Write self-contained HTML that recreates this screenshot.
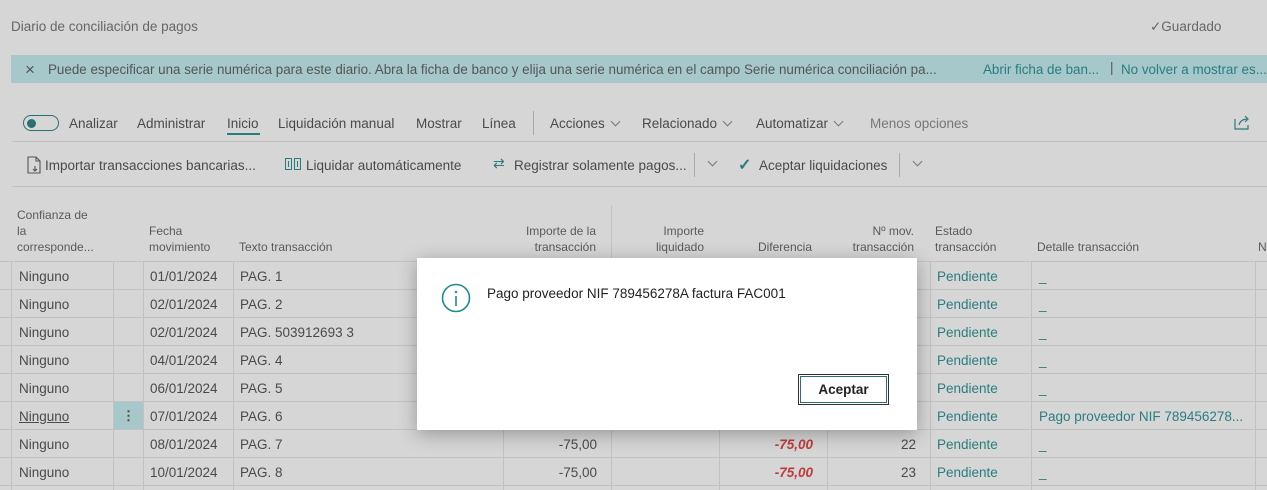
<!DOCTYPE html>
<html><head><meta charset="utf-8"><style>
*{margin:0;padding:0;box-sizing:border-box}
body{width:1267px;height:490px;overflow:hidden;background:#d6d6d6;font-family:"Liberation Sans",sans-serif;color:#4a4a4a;position:relative;font-size:13.5px}
.a{position:absolute;white-space:nowrap}
.t{color:#2a7d7e}
.h{font-size:12px;color:#5a5a5a;line-height:16px}
.hl{position:absolute;height:1px;background:#c2c2c2}
.vl{position:absolute;width:1px;background:#c2c2c2}
.cell{position:absolute;white-space:nowrap;font-size:13.5px;line-height:28px}
.chev{display:inline-block;width:7px;height:7px;border-right:1px solid #777;border-bottom:1px solid #777;transform:rotate(45deg);margin-left:7px;position:relative;top:-3px}
</style></head><body>
<div class="a" style="left:11px;top:19px;color:#666">Diario de conciliación de pagos</div>
<div class="a" style="left:1150px;top:19px;color:#666">✓Guardado</div>
<div class="a" style="left:11px;top:55px;width:1256px;height:28px;background:#a6c8ca"></div>
<div class="a" style="left:25px;top:60px;font-size:17px;color:#555">×</div>
<div class="a" style="left:48px;top:62px;color:#555;font-size:13.4px">Puede especificar una serie numérica para este diario. Abra la ficha de banco y elija una serie numérica en el campo Serie numérica conciliación pa...</div>
<div class="a t" style="left:983px;top:62px;font-size:13.4px">Abrir ficha de ban...</div>
<div class="a" style="left:1110px;top:60px;color:#555">|</div>
<div class="a t" style="left:1121px;top:62px;font-size:13.4px">No volver a mostrar es...</div>

<div class="a" style="left:23px;top:115px;width:36px;height:16px;border:1.5px solid #2a6f73;border-radius:8px"><div style="position:absolute;left:3px;top:2.5px;width:9px;height:9px;border-radius:50%;background:#2a6f73"></div></div>
<div class="a" style="left:69px;top:116px">Analizar</div>
<div class="a" style="left:137px;top:116px">Administrar</div>
<div class="a" style="left:227px;top:116px">Inicio</div>
<div class="a" style="left:227px;top:133px;width:33px;height:2px;background:#2a7d7e"></div>
<div class="a" style="left:278px;top:116px">Liquidación manual</div>
<div class="a" style="left:416px;top:116px">Mostrar</div>
<div class="a" style="left:482px;top:116px">Línea</div>
<div class="a" style="left:533px;top:111px;width:1px;height:24px;background:#aaa"></div>
<div class="a" style="left:550px;top:116px">Acciones<span class="chev"></span></div>
<div class="a" style="left:642px;top:116px">Relacionado<span class="chev"></span></div>
<div class="a" style="left:756px;top:116px">Automatizar<span class="chev"></span></div>
<div class="a" style="left:870px;top:116px;color:#777">Menos opciones</div>
<svg class="a" style="left:1233px;top:113px" width="18" height="18" viewBox="0 0 18 18"><path d="M2 6v10h13v-4M6 12c1-4 4-6 9-6M12 3l3 3-3 3" fill="none" stroke="#2a7d7e" stroke-width="1.2"/></svg>
<div class="hl" style="left:12px;top:141px;width:1255px"></div>

<svg class="a" style="left:26px;top:156px" width="16" height="18" viewBox="0 0 16 18"><path d="M2 1h8l4 4v12H2zM10 1v4h4M9 10v5M7 13l2 2 2-2" fill="none" stroke="#555" stroke-width="1.1"/></svg>
<div class="a" style="left:45px;top:158px">Importar transacciones bancarias...</div>
<svg class="a" style="left:285px;top:158px" width="16" height="12" viewBox="0 0 16 12"><rect x="0.5" y="0.5" width="6" height="11" fill="none" stroke="#2a7d7e"/><rect x="9.5" y="0.5" width="6" height="11" fill="none" stroke="#2a7d7e"/><path d="M3.5 3v6M12.5 3v6" stroke="#2a7d7e"/></svg>
<div class="a" style="left:306px;top:158px">Liquidar automáticamente</div>
<div class="a" style="left:493px;top:155px;font-size:14px;color:#2a7d7e">⇄</div>
<div class="a" style="left:514px;top:158px">Registrar solamente pagos...</div>
<div class="a" style="left:694px;top:153px;width:1px;height:24px;background:#aaa"></div>
<div class="a" style="left:702px;top:156px"><span class="chev"></span></div>
<div class="a" style="left:738px;top:155px;color:#2a7d7e;font-size:16px;font-weight:bold">✓</div>
<div class="a" style="left:759px;top:158px">Aceptar liquidaciones</div>
<div class="a" style="left:899px;top:153px;width:1px;height:24px;background:#aaa"></div>
<div class="a" style="left:907px;top:156px"><span class="chev"></span></div>
<div class="hl" style="left:12px;top:186px;width:1255px"></div>

<div class="a h" style="left:17px;top:207px">Confianza de<br>la<br>corresponde...</div>
<div class="a h" style="left:149px;top:223px">Fecha<br>movimiento</div>
<div class="a h" style="left:239px;top:239px">Texto transacción</div>
<div class="a h" style="left:496px;top:223px;width:100px;text-align:right">Importe de la<br>transacción</div>
<div class="a h" style="left:604px;top:223px;width:100px;text-align:right">Importe<br>liquidado</div>
<div class="a h" style="left:712px;top:239px;width:100px;text-align:right">Diferencia</div>
<div class="a h" style="left:814px;top:223px;width:100px;text-align:right">Nº mov.<br>transacción</div>
<div class="a h" style="left:935px;top:223px">Estado<br>transacción</div>
<div class="a h" style="left:1037px;top:239px">Detalle transacción</div>
<div class="a h" style="left:1258px;top:239px">N</div>
<div class="vl" style="left:611px;top:205px;height:56px"></div>

<div id="grid"></div>
<script>
var rows=[["01/01/2024","PAG. 1"],["02/01/2024","PAG. 2"],["02/01/2024","PAG. 503912693 3"],["04/01/2024","PAG. 4"],["06/01/2024","PAG. 5"],["07/01/2024","PAG. 6"],["08/01/2024","PAG. 7","22"],["10/01/2024","PAG. 8","23"]];
var h="";
for(var i=0;i<=8;i++)h+='<div class="hl" style="left:0;top:'+(261+i*28)+'px;width:1267px"></div>';
[11,113,143,233,503,611,719,827,930,1031,1255].forEach(function(x){h+='<div class="vl" style="left:'+x+'px;top:261px;height:229px"></div>'});
rows.forEach(function(r,i){var y=263+i*28;
h+='<div class="cell" style="left:19px;top:'+y+'px;'+(i==5?'text-decoration:underline':'')+'">Ninguno</div>';
if(i==5)h+='<div class="a" style="left:114px;top:'+(y-1)+'px;width:29px;height:27px;background:#a6c8ca;text-align:center;line-height:27px;font-weight:bold">⋮</div>';
h+='<div class="cell" style="left:150px;top:'+y+'px">'+r[0]+'</div>';
h+='<div class="cell" style="left:240px;top:'+y+'px">'+r[1]+'</div>';
if(r[2]){h+='<div class="cell" style="left:500px;top:'+y+'px;width:97px;text-align:right">-75,00</div>';
h+='<div class="cell" style="left:716px;top:'+y+'px;width:97px;text-align:right;color:#c03a3a;font-weight:bold;font-style:italic">-75,00</div>';
h+='<div class="cell" style="left:816px;top:'+y+'px;width:100px;text-align:right">'+r[2]+'</div>';}
h+='<div class="cell t" style="left:937px;top:'+y+'px">Pendiente</div>';
h+='<div class="cell t" style="left:1039px;top:'+y+'px">'+(i==5?'Pago proveedor NIF 789456278...':'_')+'</div>';
});
document.getElementById('grid').innerHTML=h;
</script>

<div class="a" style="left:417px;top:258px;width:500px;height:172px;background:#fff;box-shadow:0 4px 18px rgba(0,0,0,.3)">
<svg style="position:absolute;left:24px;top:25px" width="30" height="30" viewBox="0 0 30 30"><circle cx="15" cy="15" r="13.5" fill="none" stroke="#1f8a8c" stroke-width="1.6"/><circle cx="15" cy="9" r="1.2" fill="#1f8a8c"/><path d="M15 13v10" stroke="#1f8a8c" stroke-width="1.6"/></svg>
<div class="a" style="left:70px;top:28px;color:#222;font-size:13.5px">Pago proveedor NIF 789456278A factura FAC001</div>
<div class="a" style="left:381px;top:116px;width:91px;height:31px;border:1px solid #333;box-shadow:inset 0 0 0 1px #fff,inset 0 0 0 2px #2a6f73;text-align:center;line-height:29px;color:#222;font-weight:bold;font-size:13.5px">Aceptar</div>
</div>
</body></html>
